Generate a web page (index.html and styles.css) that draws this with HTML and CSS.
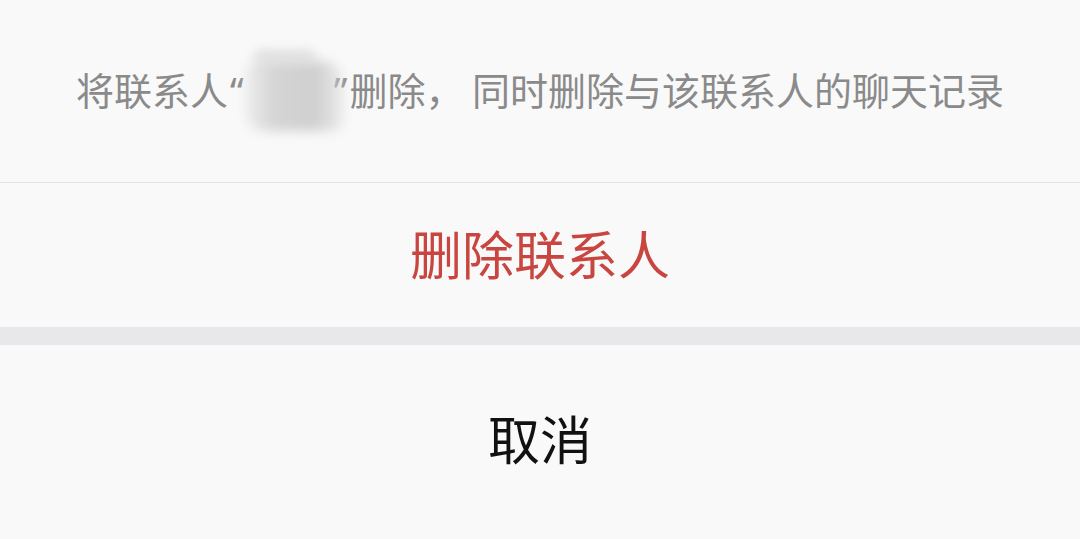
FILE: index.html
```html
<!DOCTYPE html>
<html lang="zh-CN">
<head>
<meta charset="utf-8">
<link rel="stylesheet" href="styles.css">
</head>
<body>
<div class="sheet">
  <div class="message">
    <p class="msg-text">将联系人<span class="quote">“</span><span class="name-blur" aria-hidden="true"></span><span class="quote">”</span>删除， 同时删除与该联系人的聊天记录</p>
  </div>
  <div class="action danger">删除联系人</div>
  <div class="gap"></div>
  <div class="action cancel">取消</div>
</div>
</body>
</html>
```
FILE: styles.css
```css
html, body {
  margin: 0;
  padding: 0;
  background: #f9f9f9;
}
body {
  font-family: "Noto Sans CJK SC", "Noto Sans", sans-serif;
  width: 1080px;
  height: 539px;
  overflow: hidden;
}
.sheet {
  display: flex;
  flex-direction: column;
  height: 539px;
}
.message {
  display: flex;
  align-items: center;
  justify-content: center;
  border-bottom: 1px solid #e2e2e2;
  box-sizing: border-box;
  flex: 0 0 183px;
}
.msg-text {
  margin: 0;
  font-size: 38px;
  color: #8a8a8a;
  white-space: nowrap;
  line-height: 1;
  padding-bottom: 3px;
}
.quote {
  font-family: "Noto Sans", "Liberation Sans", sans-serif;
  margin: 0 2px;
}
.name-blur {
  display: inline-block;
  position: relative;
  width: 86px;
  height: 30px;
  vertical-align: -4px;
}
.name-blur::before {
  content: "";
  position: absolute;
  left: 0;
  right: -10px;
  top: -18px;
  bottom: -22px;
  border-radius: 14px 20px 10px 18px;
  background:
    linear-gradient(90deg, rgba(228,228,228,0.6) 0%, rgba(208,208,208,0.9) 30%, rgba(202,202,202,0.9) 70%, rgba(218,218,218,0.55) 100%);
  filter: blur(6px);
}
.name-blur::after {
  content: "";
  position: absolute;
  left: 8px;
  right: 16px;
  top: -30px;
  height: 16px;
  border-radius: 8px;
  background: rgba(218,218,218,0.7);
  filter: blur(5px);
}
.action {
  display: flex;
  align-items: center;
  justify-content: center;
  font-size: 52px;
  line-height: 1;
}
.danger {
  flex: 0 0 144px;
  color: #c8463f;
  padding-bottom: 4px;
  box-sizing: border-box;
}
.gap {
  flex: 0 0 18px;
  background: #e8e8ea;
}
.cancel {
  flex: 1 1 auto;
  color: #111111;
  padding-bottom: 8px;
}
```
